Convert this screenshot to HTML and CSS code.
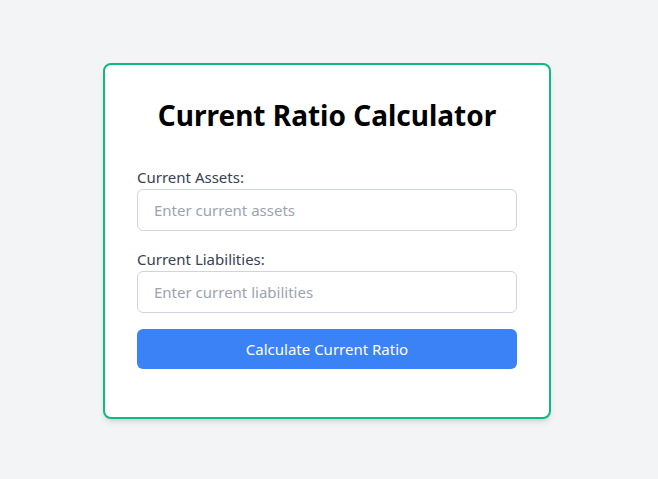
FILE: index.html
```html
<!DOCTYPE html>
<html>
<head>
<meta charset="utf-8">
<link rel="stylesheet" href="styles.css">
</head>
<body>
<div class="page">
  <div class="card">
    <h1 class="title">Current Ratio Calculator</h1>
    <div class="field">
      <label class="label" for="assets">Current Assets:</label>
      <input class="input" id="assets" type="number" placeholder="Enter current assets">
    </div>
    <div class="field">
      <label class="label" for="liabilities">Current Liabilities:</label>
      <input class="input" id="liabilities" type="number" placeholder="Enter current liabilities">
    </div>
    <button class="button">Calculate Current Ratio</button>
    <div class="result"></div>
  </div>
</div>
</body>
</html>
```
FILE: styles.css
```css
* { box-sizing: border-box; }
html, body { margin: 0; padding: 0; }
body {
  background: #f3f4f6;
  font-family: "Noto Sans", "Open Sans", sans-serif;
  color: #374151;
}
.page {
  min-height: 479px;
  display: flex;
  align-items: center;
  justify-content: center;
  padding-right: 4px;
  padding-top: 2px;
}
.card {
  width: 448px;
  background: #fff;
  border: 2px solid #10b981;
  border-radius: 8px;
  padding: 32px;
  box-shadow: 0 4px 6px -1px rgba(0,0,0,0.1), 0 2px 4px -2px rgba(0,0,0,0.1);
}
.title {
  margin: 0 0 32px;
  font-size: 28px;
  line-height: 36px;
  font-weight: 700;
  text-align: center;
  color: #000;
}
.field { margin-bottom: 16px; }
.label {
  display: block;
  font-size: 15px;
  line-height: 24px;
  color: #374151;
}
.input {
  display: block;
  width: 100%;
  height: 42px;
  padding: 8px 16px;
  border: 1px solid #d1d5db;
  border-radius: 6px;
  font-family: inherit;
  font-size: 15px;
  line-height: 24px;
  color: #374151;
  background: #fff;
  outline: none;
}
.input::placeholder { color: #9ca3af; }
.button {
  display: block;
  width: 100%;
  height: 40px;
  border: none;
  border-radius: 6px;
  background: #3b82f6;
  color: #fff;
  font-family: inherit;
  font-size: 15px;
  line-height: 24px;
  padding: 8px 16px;
}
.result { margin-top: 16px; }
```
